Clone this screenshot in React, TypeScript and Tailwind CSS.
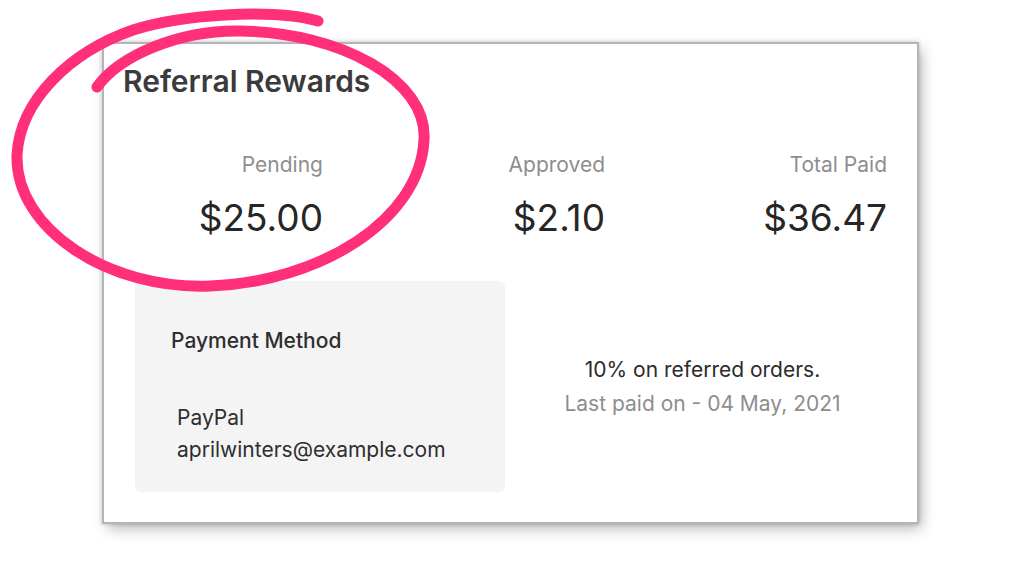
const stats = [
  { label: 'Pending', value: '$25.00' },
  { label: 'Approved', value: '$2.10' },
  { label: 'Total Paid', value: '$36.47' },
]

function Scribble() {
  return (
    <svg
      className="absolute left-0 top-0 pointer-events-none"
      width="1024"
      height="569"
      viewBox="0 0 1024 569"
      fill="none"
    >
      <path
        d="M318 21 C 270 8, 180 15, 133 30 C 70 52, 20 100, 17 155 C 15 230, 110 290, 210 286 C 320 282, 420 220, 424 140 C 428 80, 340 32, 240 31 C 180 30, 120 55, 97 87"
        stroke="#ff2f7a"
        strokeWidth="11"
        strokeLinecap="round"
        strokeLinejoin="round"
      />
    </svg>
  )
}

export default function App() {
  return (
    <div
      className="relative min-h-screen w-full overflow-hidden bg-white pt-[44px] pl-[104px]"
      style={{ fontFamily: 'Inter, "Noto Sans", sans-serif' }}
    >
      <div className="w-[813px] h-[478px] bg-white shadow-[0_0_0_2px_#b5b5b5,0_0_4px_2px_rgba(0,0,0,0.2),4px_6px_14px_rgba(0,0,0,0.3)]">
        <h2 className="pt-[19px] pl-[19px] text-[30px] leading-[36px] font-semibold text-[#3b3b3b]">
          Referral Rewards
        </h2>

        <div className="mt-[54px] pl-[19px] grid grid-cols-[200px_200px_200px] gap-x-[82px]">
          {stats.map((s) => (
            <div key={s.label} className="text-right">
              <div className="text-[21px] leading-[24px] text-[#8e8e8e]">{s.label}</div>
              <div className="mt-[19px] text-[37px] leading-[44px] text-[#262626]">{s.value}</div>
            </div>
          ))}
        </div>

        <div className="mt-[41px] flex items-center">
          <div className="ml-[31px] w-[370px] h-[211px] rounded-md bg-[#f4f4f4] pl-[36px] pt-[48px] text-[#2e2e2e]">
            <div className="text-[21px] leading-[24px] font-medium">Payment Method</div>
            <div className="mt-[49px] pl-[6px] text-[21px] leading-[32px]">
              <div>PayPal</div>
              <div>aprilwinters@example.com</div>
            </div>
          </div>
          <div className="flex-1 pr-[17px] text-center text-[21px] leading-[34px]">
            <div className="text-[#2b2b2b]">10% on referred orders.</div>
            <div className="text-[#8e8e8e]">Last paid on - 04 May, 2021</div>
          </div>
        </div>
      </div>

      <Scribble />
    </div>
  )
}
